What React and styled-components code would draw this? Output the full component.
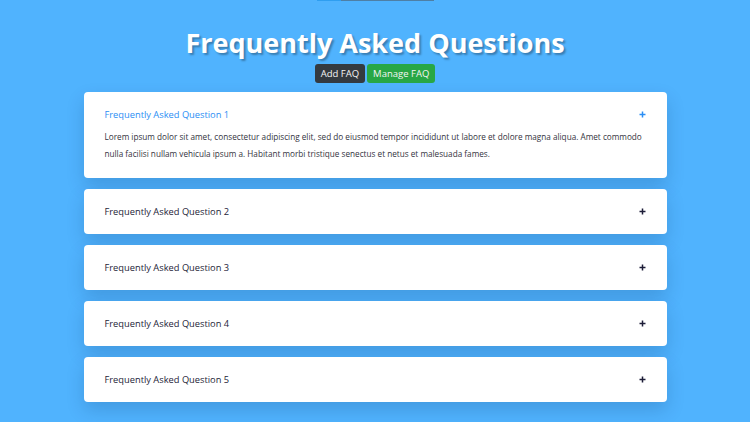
import React, { useState } from "react";
import styled, { createGlobalStyle } from "styled-components";

const Global = createGlobalStyle`
  html, body { margin: 0; padding: 0; }
  body {
    background: #50b3fe;
    font-family: "Open Sans", "Noto Sans", sans-serif;
    height: 422px;
    overflow: hidden;
  }
`;

const Page = styled.div`
  display: flex;
  flex-direction: column;
  align-items: center;
`;

const TopStrip = styled.div`
  display: flex;
  height: 1px;
`;

const StripPart = styled.div`
  height: 1px;
  width: ${(p) => p.$w}px;
  background: ${(p) => p.$c};
`;

const Title = styled.h1`
  margin: 24px 0 0;
  font-size: 27px;
  line-height: 36px;
  font-weight: 700;
  color: #fff;
  text-shadow: 2px 2px 2px rgba(0, 0, 0, 0.3);
`;

const Actions = styled.div`
  display: flex;
  gap: 2px;
  margin-top: 3px;
`;

const Button = styled.button`
  border: none;
  border-radius: 3px;
  height: 19px;
  padding: 0 6px;
  font-family: inherit;
  font-size: 9.5px;
  color: #f4f4f4;
  background: ${(p) => (p.$variant === "dark" ? "#343a40" : "#28a745")};
  cursor: pointer;
`;

const List = styled.div`
  width: 583px;
  display: flex;
  flex-direction: column;
  gap: 11px;
  margin-top: 9px;
`;

const Card = styled.div`
  background: #fff;
  border-radius: 4px;
  box-shadow: 0 8px 18px rgba(0, 40, 90, 0.18);
`;

const Header = styled.div`
  display: flex;
  align-items: center;
  justify-content: space-between;
  padding: 17px 21px ${(p) => (p.$open ? "8px" : "17px")} 21px;
  cursor: pointer;
`;

const Question = styled.span`
  font-size: 9.3px;
  line-height: 11px;
  font-weight: 500;
  color: ${(p) => (p.$open ? "#2b8ef4" : "#1d1d38")};
`;

const Plus = styled.svg`
  width: 7px;
  height: 7px;
  display: block;
`;

const Answer = styled.p`
  margin: 0;
  padding: 0 20px 16px 21px;
  font-size: 8.2px;
  line-height: 17px;
  color: #333340;
`;

const faqs = [1, 2, 3, 4, 5].map((n) => ({
  q: `Frequently Asked Question ${n}`,
  a: "Lorem ipsum dolor sit amet, consectetur adipiscing elit, sed do eiusmod tempor incididunt ut labore et dolore magna aliqua. Amet commodo nulla facilisi nullam vehicula ipsum a. Habitant morbi tristique senectus et netus et malesuada fames.",
}));

export default function App() {
  const [open, setOpen] = useState(0);
  return (
    <Page>
      <Global />
      <TopStrip>
        <StripPart $w={24} $c="#2f9ef0" />
        <StripPart $w={93} $c="#4e7fa5" />
      </TopStrip>
      <Title>Frequently Asked Questions</Title>
      <Actions>
        <Button $variant="dark">Add FAQ</Button>
        <Button $variant="green">Manage FAQ</Button>
      </Actions>
      <List>
        {faqs.map((f, i) => {
          const isOpen = open === i;
          return (
            <Card key={i}>
              <Header $open={isOpen} onClick={() => setOpen(isOpen ? -1 : i)}>
                <Question $open={isOpen}>{f.q}</Question>
                <Plus viewBox="0 0 7 7">
                  <path
                    d="M3.5 0.5v6M0.5 3.5h6"
                    stroke={isOpen ? "#2b8ef4" : "#1d1d38"}
                    strokeWidth="1.5"
                    fill="none"
                  />
                </Plus>
              </Header>
              {isOpen && <Answer>{f.a}</Answer>}
            </Card>
          );
        })}
      </List>
    </Page>
  );
}
